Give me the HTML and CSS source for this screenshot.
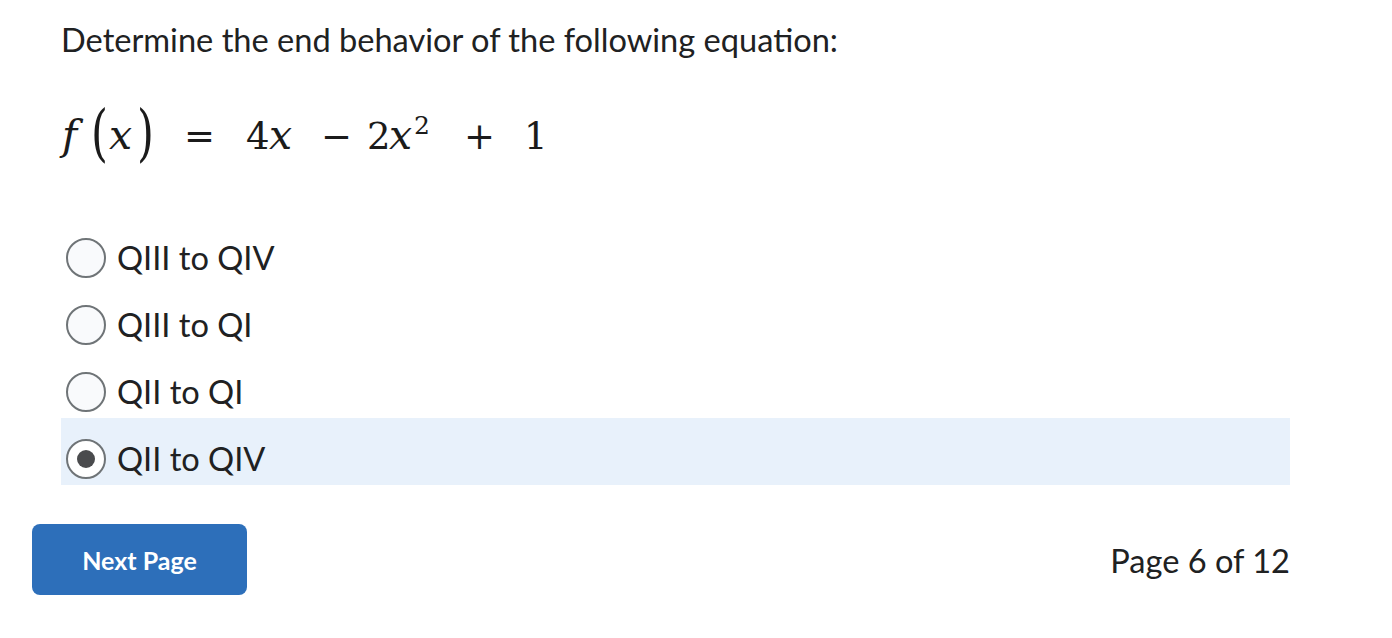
FILE: index.html
```html
<!DOCTYPE html>
<html>
<head>
<meta charset="utf-8">
<link rel="stylesheet" href="styles.css">
</head>
<body>
<div class="page">
  <div class="question">
    <p class="prompt">Determine the end behavior of the following equation:</p>
    <div class="equation"><span class="tk mi w-f">f</span><span class="tk paren w-lp">(</span><span class="tk mi w-x1">x</span><span class="tk paren w-rp">)</span><span class="tk w-eq">=</span><span class="tk w-4">4</span><span class="tk mi w-x2">x</span><span class="tk w-minus">−</span><span class="tk w-2">2</span><span class="tk mi w-x3">x</span><span class="tk sup w-sup">2</span><span class="tk w-plus">+</span><span class="tk">1</span></div>
    <div class="options">
      <label class="option"><span class="radio"></span><span class="label">QIII to QIV</span></label>
      <label class="option"><span class="radio"></span><span class="label">QIII to QI</span></label>
      <label class="option"><span class="radio"></span><span class="label">QII to QI</span></label>
      <label class="option selected"><span class="radio checked"></span><span class="label">QII to QIV</span></label>
    </div>
  </div>
  <div class="footer">
    <button class="next">Next Page</button>
    <span class="pageinfo">Page 6 of 12</span>
  </div>
</div>
</body>
</html>
```

FILE: styles.css
```css
html, body {
  margin: 0;
  padding: 0;
  background: #ffffff;
}
body {
  font-family: Lato, "Noto Sans", sans-serif;
  color: #202122;
}
.page {
  width: 1258px;
  padding: 21px 0 0 32px;
}
.question {
  padding-left: 29px;
}
.prompt {
  margin: 0;
  font-size: 32.6px;
  line-height: 38px;
}
.equation {
  margin-top: 38px;
  height: 60px;
  line-height: 60px;
  font-family: "DejaVu Serif", "Liberation Serif", serif;
  font-size: 37px;
  color: #1b1b1b;
  padding-left: 1px;
  white-space: nowrap;
}
.tk {
  display: inline-block;
}
.mi {
  font-style: italic;
  font-size: 41px;
  line-height: 1;
}
.paren {
  font-size: 62px;
  line-height: 1;
  font-weight: 400;
  position: relative;
  top: 5px;
  transform: scaleX(0.7);
  transform-origin: left center;
}
.w-f { width: 29px; }
.w-lp { width: 18px; }
.w-x1 { width: 28px; }
.w-rp { width: 47px; }
.w-eq { width: 62px; }
.w-4 { width: 23px; }
.w-x2 { width: 52px; }
.w-minus { width: 46px; }
.w-2 { width: 22px; }
.w-x3 { width: 23px; }
.w-sup { width: 50px; }
.w-plus { width: 60px; }
.sup {
  font-size: 25px;
  line-height: 1;
  position: relative;
  top: -15px;
  padding-left: 2px;
}
.options {
  margin-top: 60px;
  display: flex;
  flex-direction: column;
  width: 1229px;
}
.option {
  display: flex;
  align-items: center;
  height: 67px;
  padding-left: 5px;
  box-sizing: border-box;
  padding-top: 14px;
}
.option.selected {
  background: #e8f1fb;
}
.radio {
  width: 36px;
  height: 36px;
  border: 2px solid #6f7477;
  border-radius: 50%;
  background: #f9fafc;
  flex: none;
  display: flex;
  align-items: center;
  justify-content: center;
}
.radio.checked {
  background: #ffffff;
}
.radio.checked::after {
  content: "";
  width: 18px;
  height: 18px;
  border-radius: 50%;
  background: #4a4b4d;
}
.label {
  margin-left: 11px;
  font-size: 32.6px;
  line-height: 38px;
}
.footer {
  margin-top: 39px;
  display: flex;
  justify-content: space-between;
  align-items: center;
}
.next {
  width: 215px;
  height: 71px;
  border: none;
  border-radius: 8px;
  background: #2d6fba;
  color: #ffffff;
  font-family: Lato, "Noto Sans", sans-serif;
  font-weight: 700;
  font-size: 25px;
  padding: 0;
}
.pageinfo {
  font-size: 32.6px;
  padding-top: 2px;
}
```
